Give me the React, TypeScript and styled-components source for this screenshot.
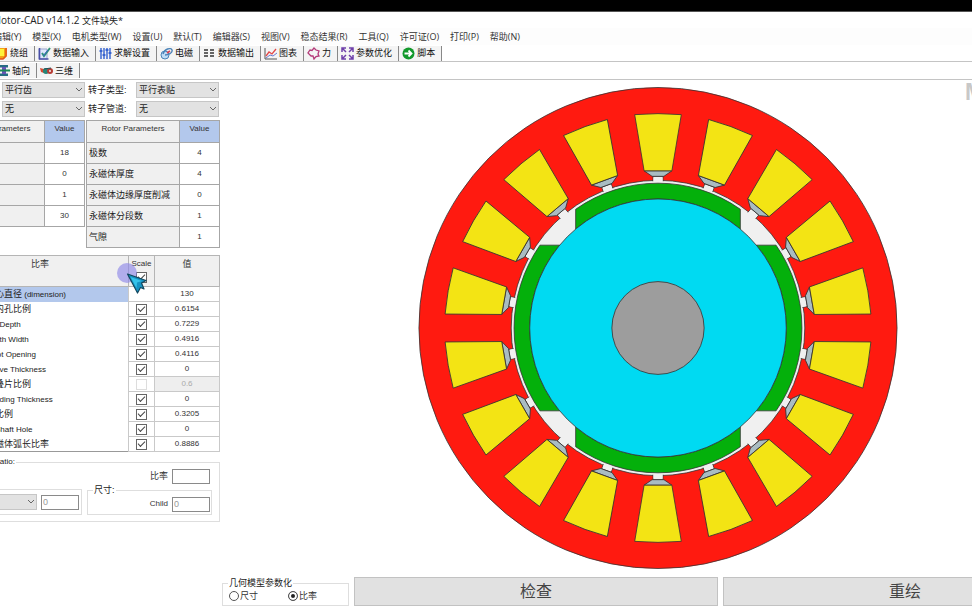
import React from "react";
import styled, { createGlobalStyle, css } from "styled-components";

const cjk = `"Noto Sans CJK SC", sans-serif`;
const Global = createGlobalStyle`
  *, *::before, *::after { box-sizing: border-box; }
  html, body { margin: 0; overflow: hidden; background: #fff; }
  body, button, input, select { font-family: "Liberation Sans", ${cjk}; color: #333; }
  body { font-size: 9px; line-height: 12px; }
  input, button, select { margin: 0; padding: 0; font-size: 9px; }
`;

/* The window is wider than the viewport and runs past both of its sides. */
const Shell = styled.div`
  height: 100vh; margin: 0 -121px 0 -49px; overflow: hidden;
  display: flex; flex-direction: column; white-space: nowrap;
`;
const Letterbox = styled.div`height: 12px; background: #000; border-bottom: 1px solid #555; flex: none;`;
const Title = styled.h1`
  margin: 0; padding-left: 41px; height: 16px;
  font: 400 10px/16px "Open Sans", ${cjk}; color: #222; flex: none;
  span { font-size: 9px; }
`;
const Menu = styled.nav`
  display: flex; gap: 11px; padding-left: 42px; height: 17px; align-items: center; flex: none;
  background: #fdfdfd;
`;
const MenuItem = styled.button`
  border: 0; background: none; font: 9px/16px "Open Sans", ${cjk}; color: #333;
`;
const Tabs = styled.div<{ $inset: number }>`
  display: flex; height: 17px; padding-left: ${(p) => p.$inset}px; align-items: center; flex: none;
  border-bottom: 1px solid #c4c4c4;
`;
const ViewTabs = styled(Tabs)`height: 18px;`;
const Tab = styled.button`
  display: flex; align-items: center; gap: 2px; height: 15px; padding: 0 6px 0 3px;
  border: 0; border-right: 1px solid #888; background: #f4f4f4;
  color: #111; font-weight: 400; line-height: 14px; font-family: ${cjk};
  svg { width: 13px; height: 13px; flex: none; }
`;
const Body = styled.div`display: flex; flex: 1; min-height: 0;`;
const Side = styled.aside`
  width: 271px; flex: none; padding: 2px 2px 0 0; display: flex; flex-direction: column;
`;
const Workspace = styled.main`flex: 1; display: flex; flex-direction: column; min-width: 0;`;

const TypeGrid = styled.div`
  display: grid; grid-template-columns: 83px 1fr 83px; column-gap: 3px; row-gap: 3px; padding: 0 1px 0 51px;
  margin-bottom: 3px;
`;
const Pick = styled.span`
  position: relative; display: block; height: 16px;
  select {
    appearance: none; width: 100%; height: 100%; border: 1px solid #c6c6c6; border-radius: 0;
    background: #e2e2e2; padding: 0 14px 0 2px; line-height: 14px; color: #222;
  }
  svg { position: absolute; right: 2px; top: 5px; width: 8px; height: 6px; pointer-events: none; }
`;
const Caption = styled.label`line-height: 16px; color: #222;`;

const Pair = styled.div`display: flex; gap: 1px; align-items: flex-start; margin-bottom: 7px;`;
const frame = css`
  border-collapse: collapse; border: 1px solid #999; table-layout: fixed;
  th, td { padding: 0; font-weight: 400; }
`;
const ParamTable = styled.table`
  ${frame} width: 134px;
  col:last-child { width: 40px; }
  th, td { border: 1px solid #a6a6a6; height: 21px; }
  thead th { height: 22px; background: #f0f0f0; font-size: 8px; vertical-align: top; padding-top: 2px; }
  thead th:last-child { background: #b3c8ec; }
  tbody th { background: #f0f0f0; text-align: left; padding-left: 2px; color: #222; }
  td { font-size: 8px; text-align: center; }
`;
const RatioTable = styled.table`
  ${frame} width: 269px;
  margin-bottom: 4px;
  col:nth-child(2) { width: 26px; }
  col:nth-child(3) { width: 65px; }
  thead th { height: 31px; background: #f0f0f0; vertical-align: top; border: 1px solid #b5b5b5; padding-top: 2px; }
  tbody th { text-align: left; padding-left: 43px; height: 15px; color: #222; }
  td { border: 1px solid #c9c9c9; text-align: center; line-height: 12px; font-size: 8px; }
`;
const Latin = styled.span`font-size: 8px;`;
const RatioRow = styled.tr<{ $selected?: boolean; $off?: boolean }>`
  th { background: ${(p) => (p.$selected ? "#b3c8ec" : "#fff")}; }
  td:last-child { background: ${(p) => (p.$off ? "#eee" : "#fff")}; color: ${(p) => (p.$off ? "#aaa" : "#333")}; }
`;
const Check = styled.input`
  appearance: none; display: block; width: 11px; height: 11px; margin: 0 auto; border: 1px solid #666; background: #fff;
  &:disabled { border-color: #ddd; }
  &:checked::after {
    content: ""; display: block; width: 7px; height: 4px; margin: 1px 0 0 1px;
    border: solid #444; border-width: 0 0 1px 1px; transform: rotate(-45deg);
  }
`;
const ScaleHead = styled.div`
  position: relative; display: flex; flex-direction: column; align-items: center; font-size: 8px; gap: 2px;
`;
const Pointer = styled.svg`
  position: absolute; left: -12px; top: 5px; width: 32px; height: 32px; z-index: 2; pointer-events: none;
`;
const Group = styled.fieldset`
  margin: 0; border: 1px solid #dedede; padding: 0; min-width: 0;
  legend { padding: 0 1px; line-height: 12px; margin-left: 5px; color: #222; }
`;
const RatioGroup = styled(Group)`
  height: 66px;
  > legend { margin-left: 41px; font-size: 8px; }
`;
const Line = styled.div`
  display: flex; justify-content: flex-end; align-items: center; gap: 4px; padding-right: 9px; height: 16px;
`;
const Box = styled.input`width: 38px; height: 15px; border: 1px solid #8a8a8a; background: #fff; color: #999; padding: 0 1px;`;
const Inner = styled.div`display: flex; gap: 5px; padding: 0 7px 0 0; align-items: flex-end;`;
const ParentGroup = styled(Group)`
  width: 130px; height: 26px; display: flex; gap: 4px; align-items: center; justify-content: flex-end; padding-right: 2px;
  ${Pick} { width: 80px; }
`;
const ChildGroup = styled(Group)`
  flex: 1; height: 31px;
  ${Line} { padding-right: 1px; font-size: 8px; }
`;

const Canvas = styled.div`
  position: relative; flex: 1; min-height: 0; display: flex; justify-content: center; padding: 7px 0;
  > svg { height: 100%; aspect-ratio: 1; }
`;
const Brand = styled.span`
  position: absolute; right: 5px; top: 0; width: 123px;
  font: 700 23px/24px "Liberation Sans", sans-serif; color: #c8c8c8;
`;
const Footer = styled.footer`display: flex; gap: 5px; padding: 0 6px 1px 0; align-items: flex-end; height: 31px; flex: none;`;
const ModeGroup = styled(Group)`
  width: 127px; height: 29px; flex: none;
  > div { display: flex; gap: 30px; padding-left: 6px; height: 14px; align-items: center; }
  label { display: flex; align-items: center; gap: 1px; }
`;
const Radio = styled.input`
  appearance: none; width: 10px; height: 10px; border: 1px solid #555; border-radius: 50%; background: #fff;
  &:checked { background: #222; box-shadow: inset 0 0 0 2px #fff; }
`;
const Action = styled.button`
  flex: 1; height: 29px; border: 1px solid #c2c2c2; background: #e1e1e1; color: #444;
  font: 400 16px/24px ${cjk}; padding-bottom: 3px;
`;

const Chevron = () => (
  <svg viewBox="0 0 8 6"><path d="M1 1l3 3 3-3" fill="none" stroke="#666" /></svg>
);
const Select = ({ id, value }: { id: string; value: string }) => (
  <Pick>
    <select id={id} aria-label={id} defaultValue={value}><option>{value}</option></select>
    <Chevron />
  </Pick>
);

const icons: Record<string, React.ReactNode> = {
  winding: <><path d="M0 1h12v8l-3 3H0z" fill="#f3a313" /><path d="M1 2h8v7H1z" fill="#fff33c" /><path d="M11 1v8l-3 3H2" stroke="#e2561f" fill="none" strokeWidth="1.5" /></>,
  input: <><path d="M1 2h8v10H1z" fill="#dfe6fb" stroke="#9aa6cf" /><path d="M1.500 1v11h9" stroke="#4a4fa8" fill="none" strokeWidth="1.6" /><path d="M4 6l2 3 6-8" stroke="#2f9377" strokeWidth="2" fill="none" /><path d="M5 9l5-6" stroke="#3b62c8" /></>,
  solver: <path d="M2 1v11M5 1v11M8 1v11M11 1v11M.5 4h3M3.500 8h3M6.500 3h3M9.500 6h3" stroke="#2456cd" fill="none" strokeWidth="1.3" />,
  magnetic: <><circle cx="5" cy="8" r="4" fill="#bfdcf5" stroke="#4b83b8" /><path d="M3 7c1-5 8-7 9-4s-4 5-7 5" stroke="#4b83b8" strokeWidth="1.4" fill="none" /><path d="M7 6l3-2" stroke="#dc4250" strokeWidth="1.6" /></>,
  output: <path d="M1 3h4M7 3h4M1 6h4M7 6h4M1 9h4M7 9h4" stroke="#333" strokeWidth="1.4" />,
  chart: <><path d="M1 1v11h12" stroke="#555" fill="none" /><path d="M2 9l3-4 3 2 4-5" stroke="#e34848" fill="none" strokeWidth="1.3" /><path d="M2 11l4-3 3 1 4-3" stroke="#697bd0" fill="none" /></>,
  force: <path d="M4 9L1 6l2-3 2 .5L7 1l2 2 3 1-1 3 1 2-3 .5L7 12l-1-3z" stroke="#b43a79" fill="none" strokeWidth="1.3" />,
  optimise: <path d="M1 5V1h4M1 1l4 4M8 1h4v4M12 1L8 5M1 8v4h4M1 12l4-4M12 8v4H8M12 12L8 8" stroke="#6e3faa" strokeWidth="1.5" fill="none" />,
  script: <><circle cx="6.5" cy="6.5" r="6" fill="#13992c" /><path d="M2.500 6.500h7M6.500 3.500l3 3-3 3" stroke="#fff" strokeWidth="1.8" fill="none" /></>,
  axial: <><path d="M3 1h8v2.500H3zM3 9.500h8V12H3z" fill="#266c82" /><path d="M5 3h4v7H5z" fill="#6653b5" /><path d="M0 6.500h13" stroke="#1b8a54" strokeWidth="2" /></>,
  solid: <><path d="M0 4l4 1v4L1 8z" fill="#d84a32" /><circle cx="6" cy="7" r="3" fill="#258779" /><circle cx="10" cy="7" r="3" fill="#b73c34" /><path d="M4 5l7-1" stroke="#234e55" /><circle cx="10" cy="7" r="1" fill="#eee" /></>,
};
const Icon = ({ name }: { name: string }) => <svg viewBox="0 0 13 13">{icons[name]}</svg>;

const menus = ["编辑(Y)", "模型(X)", "电机类型(W)", "设置(U)", "默认(T)", "编辑器(S)", "视图(V)", "稳态结果(R)", "工具(Q)", "许可证(O)", "打印(P)", "帮助(N)"];
const tabs = [["winding", "绕组"], ["input", "数据输入"], ["solver", "求解设置"], ["magnetic", "电磁"], ["output", "数据输出"], ["chart", "图表"], ["force", "力"], ["optimise", "参数优化"], ["script", "脚本"]];
const views = [["axial", "轴向"], ["solid", "三维"]];
const stator: [string, string][] = [["", "18"], ["", "0"], ["", "1"], ["", "30"]];
const rotor: [string, string][] = [["极数", "4"], ["永磁体厚度", "4"], ["永磁体边缘厚度削减", "0"], ["永磁体分段数", "1"], ["气隙", "1"]];
const ratios: { label: string; note?: string; value: string; latin?: boolean; scale?: "none" | "off" }[] = [
  { label: "心直径", note: " (dimension)", value: "130", scale: "none" },
  { label: "内孔比例", value: "0.6154" },
  { label: "t Depth", value: "0.7229", latin: true },
  { label: "oth Width", value: "0.4916", latin: true },
  { label: "lot Opening", value: "0.4116", latin: true },
  { label: "eve Thickness", value: "0", latin: true },
  { label: "叠片比例", value: "0.6", scale: "off" },
  { label: "nding Thickness", value: "0", latin: true },
  { label: "比例", value: "0.3205" },
  { label: "Shaft Hole", value: "0", latin: true },
  { label: "磁体弧长比率", value: "0.8886" },
];

const Params = ({ title, rows }: { title: string; rows: [string, string][] }) => (
  <ParamTable>
    <colgroup><col /><col /></colgroup>
    <thead><tr><th>{title}</th><th>Value</th></tr></thead>
    <tbody>{rows.map(([k, v], i) => <tr key={i}><th>{k}</th><td>{v}</td></tr>)}</tbody>
  </ParamTable>
);

const steps = (n: number) => Array.from({ length: n }, (_, i) => (i * 360) / n);
const Motor = () => (
  <svg viewBox="-241.5 -241.5 483 483" role="img" aria-label="Motor cross-section">
    <g transform="scale(0.994 1)" stroke="#333" strokeWidth=".8">
      <circle r="241" fill="#ff1a10" />
      <circle r="148" fill="#f0f0f0" />
      {steps(18).map((a) => (
        <g key={a} transform={`rotate(${a})`}>
          <path d="M-5-147V-152H5V-147" fill="#f0f0f0" />
          <path d="M-4.600-146V-151H4.600V-146Z" fill="#f0f0f0" stroke="none" />
          <path d="M-14-157.500L-6-152H6L14-157.500Z" fill="#a9bcc2" />
          <path d="M-23.500-213.800Q0-215.800 23.500-213.800L14-157.500H-14Z" fill="#f3e414" />
        </g>
      ))}
      {steps(4).map((a) => (
        <path key={a} transform={`rotate(${a})`} d="M-83-99.100V-119A145 145 0 0 1 83-119V-99.100A129.300 129.300 0 0 0-83-99.100Z" fill="#04b00b" />
      ))}
      <circle r="129.300" fill="#00daf2" />
      <circle r="46.500" fill="#9d9d9d" />
    </g>
  </svg>
);

export default function App() {
  return (
    <>
      <Global />
      <Shell>
        <Letterbox />
        <Title>Motor-CAD v14.1.2 <span>文件缺失*</span></Title>
        <Menu>{menus.map((m) => <MenuItem key={m}>{m}</MenuItem>)}</Menu>
        <Tabs $inset={41}>
          {tabs.map(([i, t]) => <Tab key={t}><Icon name={i} />{t}</Tab>)}
        </Tabs>
        <ViewTabs $inset={43}>
          {views.map(([i, t]) => <Tab key={t}><Icon name={i} />{t}</Tab>)}
        </ViewTabs>
        <Body>
          <Side>
            <TypeGrid>
              <Select id="slot-type" value="平行齿" />
              <Caption htmlFor="rotor-type">转子类型:</Caption>
              <Select id="rotor-type" value="平行表贴" />
              <Select id="stator-duct" value="无" />
              <Caption htmlFor="rotor-duct">转子管道:</Caption>
              <Select id="rotor-duct" value="无" />
            </TypeGrid>
            <Pair>
              <Params title="Stator Parameters" rows={stator} />
              <Params title="Rotor Parameters" rows={rotor} />
            </Pair>
            <RatioTable>
              <colgroup><col /><col /><col /></colgroup>
              <thead>
                <tr>
                  <th>比率</th>
                  <th>
                    <ScaleHead>
                      Scale
                      <Check type="checkbox" defaultChecked aria-label="Scale all" />
                      <Pointer viewBox="0 0 32 32" aria-hidden="true">
                        <circle cx="10" cy="10" r="10" fill="#8f88e8" fillOpacity=".65" />
                        <path d="M10.500 11L29 17.500L24.500 20L27 26L23.500 24.500L20.500 30Z" fill="#1593c4" stroke="#12485f" strokeWidth="1.2" strokeLinejoin="round" />
                        <path d="M13.500 14L25 18L20 19.500L19.500 25Z" fill="#35c3ea" />
                      </Pointer>
                    </ScaleHead>
                  </th>
                  <th>值</th>
                </tr>
              </thead>
              <tbody>
                {ratios.map((r) => (
                  <RatioRow key={r.label} $selected={r.scale === "none"} $off={r.scale === "off"}>
                    <th>{r.latin ? <Latin>{r.label}</Latin> : r.label}{r.note && <Latin>{r.note}</Latin>}</th>
                    <td>{r.scale !== "none" && <Check type="checkbox" aria-label={r.label} defaultChecked={!r.scale} disabled={r.scale === "off"} />}</td>
                    <td>{r.value}</td>
                  </RatioRow>
                ))}
              </tbody>
            </RatioTable>
            <RatioGroup>
              <legend>Ratio:</legend>
              <Line><label htmlFor="ratio">比率</label><Box id="ratio" /></Line>
              <Inner>
                <ParentGroup>
                  <Select id="parent" value="" />
                  <Box aria-label="Parent" defaultValue="0" />
                </ParentGroup>
                <ChildGroup>
                  <legend>尺寸:</legend>
                  <Line><label htmlFor="child">Child</label><Box id="child" defaultValue="0" /></Line>
                </ChildGroup>
              </Inner>
            </RatioGroup>
          </Side>
          <Workspace>
            <Canvas>
              <Motor />
              <Brand>Motor-CAD</Brand>
            </Canvas>
            <Footer>
              <ModeGroup>
                <legend>几何模型参数化</legend>
                <div>
                  <label><Radio type="radio" name="mode" />尺寸</label>
                  <label><Radio type="radio" name="mode" defaultChecked />比率</label>
                </div>
              </ModeGroup>
              <Action>检查</Action>
              <Action>重绘</Action>
            </Footer>
          </Workspace>
        </Body>
      </Shell>
    </>
  );
}
